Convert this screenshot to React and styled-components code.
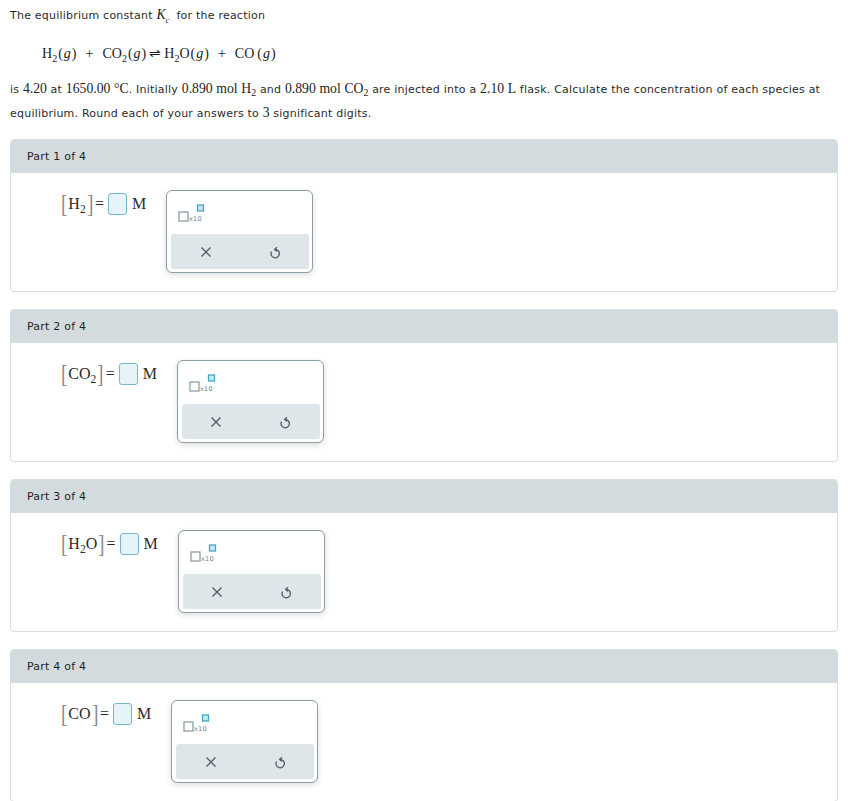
import React from "react";
import styled, { createGlobalStyle } from "styled-components";

const GlobalStyle = createGlobalStyle`
  body {
    margin: 0;
    background: #ffffff;
    font-family: "DejaVu Sans", Verdana, sans-serif;
    font-size: 11px;
    letter-spacing: 0.22px;
    color: #2b2b2b;
  }
`;

const Page = styled.div`
  padding: 4px 10px 0 10px;
`;

const Line = styled.div`
  height: 24px;
  line-height: 24px;
  white-space: nowrap;
`;

const Equation = styled.div`
  height: 24px;
  margin: 14px 0 12px 32px;
  line-height: 24px;
  font-family: "Liberation Serif", "Times New Roman", serif;
  font-size: 14px;
  letter-spacing: 0;
  color: #222;
  white-space: nowrap;
`;

const Math = styled.span`
  font-family: "Liberation Serif", "Times New Roman", serif;
  font-size: 13.7px;
  line-height: 1;
  letter-spacing: 0;
  color: #222;
  font-style: ${(p) => (p.italic ? "italic" : "normal")};
`;

const Sub = styled.sub`
  font-size: 0.72em;
  vertical-align: -0.35em;
  line-height: 0;
`;

const SubC = styled.span`
  font-family: "Liberation Serif", "Times New Roman", serif;
  font-style: italic;
  font-size: 9px;
  line-height: 0;
  vertical-align: -4px;
  margin-right: 3px;
`;

const Phase = styled.span`
  margin-left: ${(p) => (p.spaced ? "3px" : "1px")};
  i {
    padding: 0 1px;
  }
`;

const Plus = styled.span`
  margin: 0 9px;
`;

const Arrow = styled.span`
  margin: 0 3px;
  font-size: 14px;
`;

const Parts = styled.div`
  margin-top: 13px;
  display: flex;
  flex-direction: column;
  gap: 17px;
`;

const Panel = styled.section`
  width: 826px;
  border: 1px solid #d5dee1;
  border-radius: 4px;
  overflow: hidden;
`;

const PanelHeader = styled.div`
  height: 33px;
  background: #d3dbde;
  display: flex;
  align-items: center;
  padding-left: 16px;
  color: #1f1f1f;
  font-size: 11px;
`;

const PanelBody = styled.div`
  display: flex;
  align-items: flex-start;
  padding: 18px 0 18px 49px;
`;

const Expression = styled.div`
  display: flex;
  align-items: center;
  height: 26px;
  padding-right: 20px;
  font-family: "Liberation Serif", "Times New Roman", serif;
  font-size: 16px;
  letter-spacing: 0;
  color: #2a2a2a;
`;

const Bracket = styled.span`
  font-size: 25px;
  line-height: 1;
  color: #8a8a8a;
  transform: scaleX(0.78);
  margin-top: -2px;
`;

const Species = styled.span`
  padding: 0;
`;

const Equals = styled.span`
  margin: 0 4px 0 1px;
`;

const InputBox = styled.span`
  display: inline-block;
  width: 17px;
  height: 20px;
  border: 1.5px solid #74b8cb;
  border-radius: 3px;
  background: #e6f4f8;
  margin-right: 5px;
`;

const Widget = styled.div`
  width: 145px;
  height: 81px;
  border: 1px solid #8c9fa7;
  border-radius: 6px;
  box-shadow: 0 2px 6px rgba(0, 0, 0, 0.14);
  display: flex;
  flex-direction: column;
  background: #fff;
  margin-top: -1px;
`;

const WidgetTop = styled.div`
  height: 43px;
  padding-left: 11px;
  display: flex;
  align-items: flex-start;
  padding-top: 13px;
  box-sizing: border-box;
`;

const ToolBar = styled.div`
  flex: 1;
  margin: 0 3px 3px 4px;
  background: #dfe6e9;
  border-radius: 3px;
  display: flex;
`;

const ToolButton = styled.div`
  flex: 1;
  display: flex;
  align-items: center;
  justify-content: center;
`;

function SciIcon() {
  return (
    <svg width="28" height="20" viewBox="0 0 28 20">
      <rect x="1" y="8" width="9" height="9" fill="#fff" stroke="#8e9ea5" strokeWidth="1.3" />
      <text x="11" y="17" fontSize="6.5" fill="#6f7f86" fontFamily="DejaVu Sans, sans-serif">
        x10
      </text>
      <rect x="19.5" y="1" width="6" height="6" fill="#c4e8f0" stroke="#3ea9c2" strokeWidth="1.3" />
    </svg>
  );
}

function CloseIcon() {
  return (
    <svg width="12" height="12" viewBox="0 0 12 12">
      <path d="M1.5 1.5 L10.5 10.5 M10.5 1.5 L1.5 10.5" stroke="#4d5c63" strokeWidth="1.3" fill="none" />
    </svg>
  );
}

function UndoIcon() {
  return (
    <svg width="12" height="14" viewBox="0 0 12 14">
      <g fill="none" stroke="#4d5c63" strokeWidth="1.3" strokeLinecap="round" strokeLinejoin="round">
        <path d="M2.3 7 A4.2 4.2 0 1 0 6 4.4" />
        <path d="M7.6 2.6 L5.6 4.4 L7.6 6.1" />
      </g>
    </svg>
  );
}

const parts = [
  { n: 1, label: <>H<Sub>2</Sub></> },
  { n: 2, label: <>CO<Sub>2</Sub></> },
  { n: 3, label: <>H<Sub>2</Sub>O</> },
  { n: 4, label: <>CO</> },
];

function Part({ n, label }) {
  return (
    <Panel>
      <PanelHeader>Part {n} of 4</PanelHeader>
      <PanelBody>
        <Expression>
          <Bracket>[</Bracket>
          <Species>{label}</Species>
          <Bracket>]</Bracket>
          <Equals>=</Equals>
          <InputBox />
          M
        </Expression>
        <Widget>
          <WidgetTop>
            <SciIcon />
          </WidgetTop>
          <ToolBar>
            <ToolButton>
              <CloseIcon />
            </ToolButton>
            <ToolButton>
              <UndoIcon />
            </ToolButton>
          </ToolBar>
        </Widget>
      </PanelBody>
    </Panel>
  );
}

export default function App() {
  return (
    <>
      <GlobalStyle />
      <Page>
        <Line>
          The equilibrium constant <Math italic>K</Math>
          <SubC>c</SubC> for the reaction
        </Line>
        <Equation>
          H<Sub>2</Sub>
          <Phase>(<i>g</i>)</Phase>
          <Plus>+</Plus>CO<Sub>2</Sub>
          <Phase>(<i>g</i>)</Phase>
          <Arrow>⇌</Arrow>H<Sub>2</Sub>O<Phase>(<i>g</i>)</Phase>
          <Plus>+</Plus>CO<Phase spaced>(<i>g</i>)</Phase>
        </Equation>
        <Line>
          is <Math>4.20</Math> at <Math>1650.00</Math> <Math>°C</Math>. Initially <Math>0.890</Math> <Math>mol</Math>{" "}
          <Math>
            H<Sub>2</Sub>
          </Math>{" "}
          and <Math>0.890</Math> <Math>mol</Math>{" "}
          <Math>
            CO<Sub>2</Sub>
          </Math>{" "}
          are injected into a <Math>2.10</Math> <Math>L</Math> flask. Calculate the concentration of each species at
        </Line>
        <Line>
          equilibrium. Round each of your answers to <Math>3</Math> significant digits.
        </Line>
        <Parts>
          {parts.map((p) => (
            <Part key={p.n} {...p} />
          ))}
        </Parts>
      </Page>
    </>
  );
}
